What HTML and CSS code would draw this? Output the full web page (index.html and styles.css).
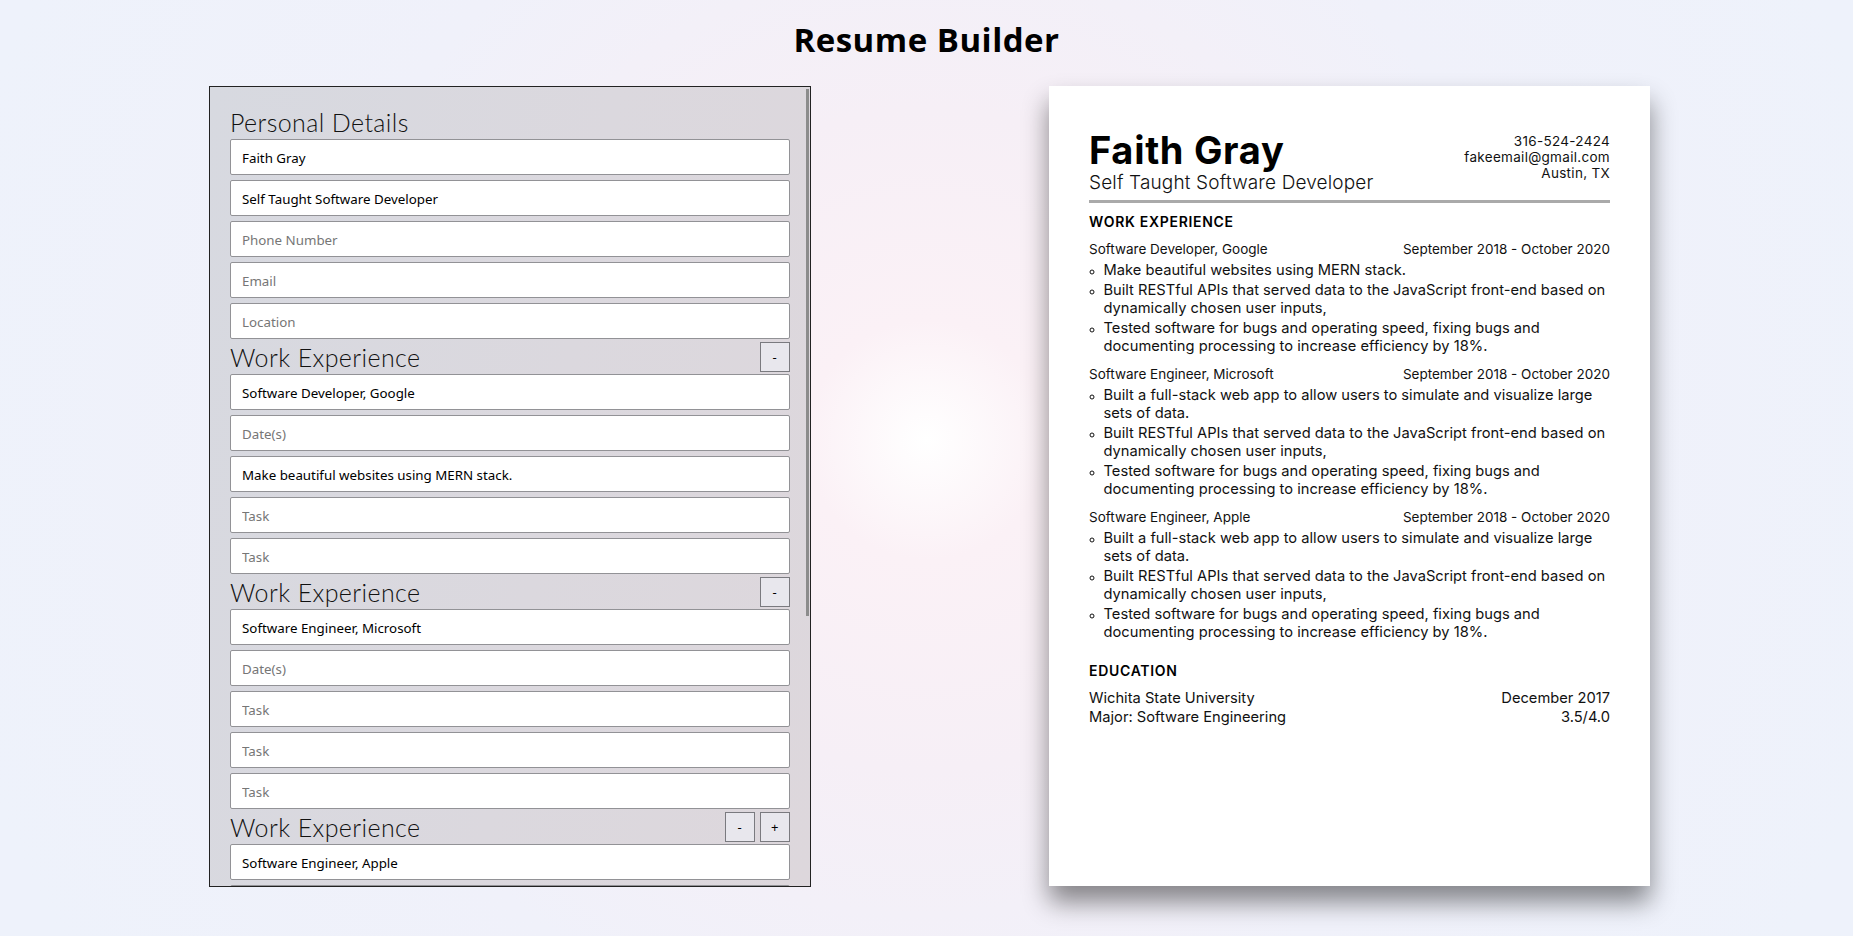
FILE: index.html
```html
<!DOCTYPE html>
<html lang="en">
<head>
<meta charset="utf-8">
<title>Resume Builder</title>
<link rel="stylesheet" href="styles.css">
</head>
<body>
<h1 class="app-title">Resume Builder</h1>
<main class="workspace">
  <div class="editor-frame">
  <form class="editor">
    <div class="section-head"><h2 class="section-title">Personal Details</h2></div>
    <input class="field" type="text" value="Faith Gray" placeholder="Name">
    <input class="field" type="text" value="Self Taught Software Developer" placeholder="Title">
    <input class="field" type="text" placeholder="Phone Number">
    <input class="field" type="text" placeholder="Email">
    <input class="field" type="text" placeholder="Location">

    <div class="section-head"><h2 class="section-title">Work Experience</h2><div class="head-buttons"><button type="button" class="small-btn">-</button></div></div>
    <input class="field" type="text" value="Software Developer, Google" placeholder="Position, Company">
    <input class="field" type="text" placeholder="Date(s)">
    <input class="field" type="text" value="Make beautiful websites using MERN stack." placeholder="Task">
    <input class="field" type="text" placeholder="Task">
    <input class="field" type="text" placeholder="Task">

    <div class="section-head"><h2 class="section-title">Work Experience</h2><div class="head-buttons"><button type="button" class="small-btn">-</button></div></div>
    <input class="field" type="text" value="Software Engineer, Microsoft" placeholder="Position, Company">
    <input class="field" type="text" placeholder="Date(s)">
    <input class="field" type="text" placeholder="Task">
    <input class="field" type="text" placeholder="Task">
    <input class="field" type="text" placeholder="Task">

    <div class="section-head"><h2 class="section-title">Work Experience</h2><div class="head-buttons"><button type="button" class="small-btn">-</button><button type="button" class="small-btn">+</button></div></div>
    <input class="field" type="text" value="Software Engineer, Apple" placeholder="Position, Company">
    <input class="field" type="text" placeholder="Date(s)">
    <input class="field" type="text" placeholder="Task">
    <input class="field" type="text" placeholder="Task">
    <input class="field" type="text" placeholder="Task">

    <div class="section-head"><h2 class="section-title">Education</h2></div>
    <input class="field" type="text" placeholder="School">
    <input class="field" type="text" placeholder="Degree">
    <input class="field" type="text" placeholder="Date">
    <input class="field" type="text" placeholder="GPA">
  </form>
  </div>

  <article class="paper">
    <header class="cv-header">
      <div class="cv-identity">
        <div class="cv-name">Faith Gray</div>
        <div class="cv-role">Self Taught Software Developer</div>
      </div>
      <div class="cv-contact">
        <div>316-524-2424</div>
        <div>fakeemail@gmail.com</div>
        <div>Austin, TX</div>
      </div>
    </header>

    <section class="cv-section">
      <h3 class="cv-heading">WORK EXPERIENCE</h3>
      <div class="job">
        <div class="job-row"><span>Software Developer, Google</span><span>September 2018 - October 2020</span></div>
        <ul class="tasks">
          <li>Make beautiful websites using MERN stack.</li>
          <li>Built RESTful APIs that served data to the JavaScript front-end based on dynamically chosen user inputs,</li>
          <li>Tested software for bugs and operating speed, fixing bugs and documenting processing to increase efficiency by 18%.</li>
        </ul>
      </div>
      <div class="job">
        <div class="job-row"><span>Software Engineer, Microsoft</span><span>September 2018 - October 2020</span></div>
        <ul class="tasks">
          <li>Built a full-stack web app to allow users to simulate and visualize large sets of data.</li>
          <li>Built RESTful APIs that served data to the JavaScript front-end based on dynamically chosen user inputs,</li>
          <li>Tested software for bugs and operating speed, fixing bugs and documenting processing to increase efficiency by 18%.</li>
        </ul>
      </div>
      <div class="job">
        <div class="job-row"><span>Software Engineer, Apple</span><span>September 2018 - October 2020</span></div>
        <ul class="tasks">
          <li>Built a full-stack web app to allow users to simulate and visualize large sets of data.</li>
          <li>Built RESTful APIs that served data to the JavaScript front-end based on dynamically chosen user inputs,</li>
          <li>Tested software for bugs and operating speed, fixing bugs and documenting processing to increase efficiency by 18%.</li>
        </ul>
      </div>
    </section>

    <section class="cv-section cv-education">
      <h3 class="cv-heading">EDUCATION</h3>
      <div class="edu-row"><span>Wichita State University</span><span>December 2017</span></div>
      <div class="edu-row"><span>Major: Software Engineering</span><span>3.5/4.0</span></div>
    </section>
  </article>
</main>
</body>
</html>
```

FILE: styles.css
```css
html, body {
  height: 100%;
}

body {
  margin: 0;
  overflow: hidden;
  color: #000;
  font-family: "Lato", "Noto Sans", sans-serif;
  background:
    radial-gradient(circle at 50% 47%, #ffffff 0px, #fbf1f6 120px, #f6eff6 330px, #f0f1fa 620px, #eef2fb 1000px);
}

.app-title {
  margin: 19px 0 26px;
  text-align: center;
  font-family: "Open Sans", sans-serif;
  font-weight: 700;
  font-size: 33px;
  line-height: 41px;
  letter-spacing: 0.5px;
}

.workspace {
  display: flex;
  align-items: flex-start;
  gap: 238px;
  padding-left: 209px;
}

/* ---------- editor ---------- */
.editor-frame {
  position: relative;
  flex: none;
}

/* scrollbar thumb drawn over the panel edge */
.editor-frame::after {
  content: "";
  position: absolute;
  top: 3px;
  right: 2px;
  width: 3px;
  height: 527px;
  background: #8c8c8c;
}

.editor {
  box-sizing: border-box;
  width: 602px;
  height: 801px;
  overflow-y: auto;
  scrollbar-width: none;
  display: flex;
  flex-direction: column;
  padding: 20px 20.4px 20px 20px;
  border: 1px solid #222;
  background: linear-gradient(100deg, #d7d9e0 0%, #dbd8de 55%, #ddd7dc 100%);
}

.editor::-webkit-scrollbar {
  display: none;
}

.section-head {
  flex: none;
  display: flex;
  align-items: center;
  justify-content: space-between;
  height: 30px;
  margin: -2px 0 2px;
}

.section-head:first-child {
  margin-top: 0;
}

.section-title {
  margin: 0;
  font-family: "Lato", sans-serif;
  font-weight: 300;
  font-size: 25px;
  line-height: 30px;
  letter-spacing: 0.4px;
  color: #111;
}

.head-buttons {
  display: flex;
  gap: 5px;
}

.small-btn {
  box-sizing: border-box;
  width: 30px;
  height: 30px;
  padding: 0;
  border: 1px solid #7a7a7f;
  background: #e8e7ed;
  color: #000;
  font-family: "Noto Sans", sans-serif;
  font-size: 13px;
  line-height: 1;
}

.field {
  flex: none;
  box-sizing: border-box;
  width: 100%;
  height: 36px;
  margin: 0 0 5px;
  padding: 1px 11px 0;
  border: 1px solid #929296;
  border-radius: 2px;
  background: #fff;
  color: #000;
  font-family: "Noto Sans", sans-serif;
  font-size: 13.33px;
}

.field::placeholder {
  color: #767676;
}

/* ---------- resume paper ---------- */
.paper {
  box-sizing: border-box;
  width: 601px;
  height: 800px;
  flex: none;
  padding: 42.5px 40px 40px;
  background: #fff;
  box-shadow: 0 16px 24px rgba(0, 0, 0, 0.45);
  font-family: "Inter", sans-serif;
  color: #111;
}

.cv-header {
  display: flex;
  justify-content: space-between;
  align-items: flex-start;
  padding-bottom: 6px;
  border-bottom: 3px solid #aaa;
}

.cv-name {
  font-weight: 700;
  font-size: 38px;
  line-height: 42px;
  letter-spacing: 0.7px;
  color: #000;
}

.cv-role {
  margin-top: 1px;
  font-weight: 300;
  font-size: 19px;
  line-height: 22px;
  letter-spacing: 0.15px;
}

.cv-contact {
  padding-top: 4px;
  text-align: right;
  font-size: 13.5px;
  line-height: 16px;
  letter-spacing: 0.3px;
}

.cv-section {
  margin-top: 11px;
}

.cv-heading {
  margin: 0 0 11.5px;
  font-size: 14px;
  font-weight: 600;
  line-height: 16px;
  letter-spacing: 0.7px;
  color: #000;
}

.job {
  margin-bottom: 11px;
}

.job-row,
.edu-row {
  display: flex;
  justify-content: space-between;
}

.job-row {
  font-size: 13.5px;
  line-height: 16px;
}

.tasks {
  margin: 4px 0 0;
  padding-left: 14.5px;
  list-style: circle;
  font-size: 14.7px;
  line-height: 18px;
}

.tasks li + li {
  margin-top: 2px;
}

.tasks li::marker {
  font-size: 11px;
}

.cv-education {
  margin-top: 21.5px;
}

.cv-education .cv-heading {
  margin-bottom: 10.5px;
}

.edu-row {
  font-size: 14.7px;
  line-height: 19px;
}
```
